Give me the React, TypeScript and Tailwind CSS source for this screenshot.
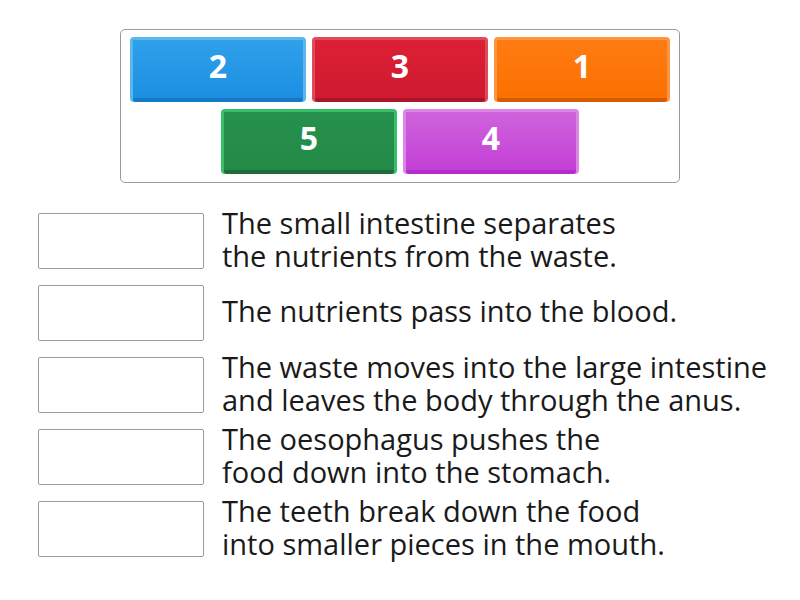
import type { ReactNode } from 'react';

type Tile = { label: string; rim: string; face: string; base: string };

const TILES_TOP: Tile[] = [
  { label: '2', rim: 'bg-[#5cb6ee]', face: 'bg-gradient-to-b from-[#2fa0ea] to-[#1a8fe2]', base: 'border-[#1679c4]' },
  { label: '3', rim: 'bg-[#e04a5c]', face: 'bg-gradient-to-b from-[#dc2036] to-[#cf1a2f]', base: 'border-[#a9162a]' },
  { label: '1', rim: 'bg-[#ff9540]', face: 'bg-gradient-to-b from-[#ff7c12] to-[#fb7000]', base: 'border-[#d35d00]' },
];

const TILES_BOTTOM: Tile[] = [
  { label: '5', rim: 'bg-[#36c06a]', face: 'bg-gradient-to-b from-[#25914c] to-[#238a48]', base: 'border-[#1c6d39]' },
  { label: '4', rim: 'bg-[#dc86e6]', face: 'bg-gradient-to-b from-[#cf62dc] to-[#c33fd6]', base: 'border-[#b62ccb]' },
];

const STATEMENTS: ReactNode[] = [
  <>The small intestine separates<br />the nutrients from the waste.</>,
  <>The nutrients pass into the blood.</>,
  <>The waste moves into the large intestine<br />and leaves the body through the anus.</>,
  <>The oesophagus pushes the<br />food down into the stomach.</>,
  <>The teeth break down the food<br />into smaller pieces in the mouth.</>,
];

function NumberTile({ tile }: { tile: Tile }) {
  return (
    <div className={`flex h-[65px] w-[176px] flex-col rounded-[4px] px-[3px] pt-[3px] ${tile.rim}`}>
      <div className={`flex flex-1 items-center justify-center rounded-b-[3px] border-b-[4px] pb-[7px] ${tile.face} ${tile.base}`}>
        <span className="text-[32px] font-bold leading-none text-white">{tile.label}</span>
      </div>
    </div>
  );
}

export default function App() {
  return (
    <div className="h-[600px] w-[800px] bg-white font-['Open_Sans',sans-serif] text-[#1a1a1a]">
      <div className="pt-[29px]">
        <div className="mx-auto flex w-[560px] flex-col items-center gap-[7px] rounded-[5px] border border-[#9a9a9a] pb-[8px] pt-[7px]">
          <div className="flex gap-[6px]">
            {TILES_TOP.map((t) => (
              <NumberTile key={t.label} tile={t} />
            ))}
          </div>
          <div className="flex gap-[6px]">
            {TILES_BOTTOM.map((t) => (
              <NumberTile key={t.label} tile={t} />
            ))}
          </div>
        </div>
      </div>

      <div className="mt-[30px] flex flex-col gap-[16px] pl-[38px]">
        {STATEMENTS.map((s, i) => (
          <div key={i} className="flex h-[56px] items-center gap-[18px]">
            <div className="h-[56px] w-[166px] shrink-0 rounded-[2px] border border-[#9a9a9a] bg-white" />
            <p className="whitespace-nowrap pb-[5px] text-[29px] leading-[33px]">{s}</p>
          </div>
        ))}
      </div>
    </div>
  );
}
